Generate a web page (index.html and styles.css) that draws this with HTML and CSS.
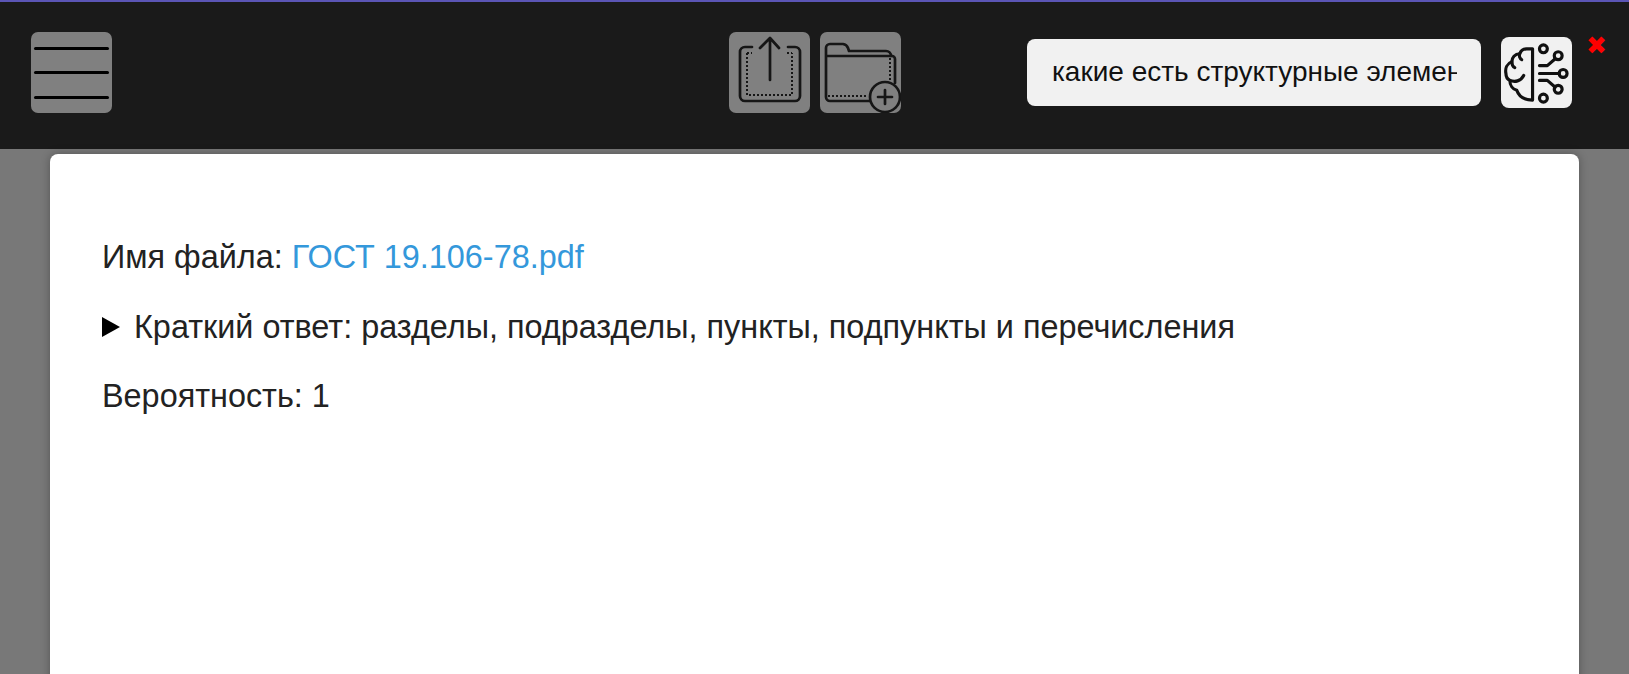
FILE: index.html
```html
<!DOCTYPE html>
<html lang="ru">
<head>
  <meta charset="UTF-8" />
  <meta name="viewport" content="width=device-width, initial-scale=1.0"/>
  <title>Поиск по документам</title>
  <link rel="stylesheet" href="styles.css">
</head>
<body>

  <header class="topbar">
    <button class="tool-button menu-button" aria-label="Меню">
      <span></span>
      <span></span>
      <span></span>
    </button>

    <div class="file-tools">
      <button class="tool-button" aria-label="Загрузить файл">
        <svg class="tool-icon" viewBox="0 0 81 81">
          <path d="M23 15h-7a5 5 0 0 0-5 5v44a5 5 0 0 0 5 5h50a5 5 0 0 0 5-5V20a5 5 0 0 0-5-5h-7" />
          <path d="M41 48V6M31 16L41 6l9 10" />
          <path class="dots" d="M18 21v42h45V21M18 21h5M58 21h5" />
        </svg>
      </button>
      <button class="tool-button" aria-label="Добавить папку">
        <svg class="tool-icon" viewBox="0 0 81 81">
          <path d="M50 69H10a4 4 0 0 1-4-4V16a4 4 0 0 1 4-4h13a6 6 0 0 1 5 4l1 3h37a5 5 0 0 1 5 5H6" />
          <path d="M71 24h1a3 3 0 0 1 3 3v24" />
          <path class="dots" d="M8 64h39M70 26v23" />
          <circle class="plus-ring" cx="65" cy="65" r="15" />
          <path d="M58 65h14M65 58v14" />
        </svg>
      </button>
    </div>

    <div class="search">
      <input class="search-input" type="text" value="какие есть структурные элементы документа" />
      <button class="ask-button" aria-label="Спросить">
        <svg class="brain-icon" viewBox="0 0 72 70">
          <path d="M32 11v52M32 11h-6c-4 0-6 2-7 5-5 0-8 4-8 8-5 2-7 7-6 12 0 3 2 6 4 7 0 5 3 9 7 10 2 6 7 10 16 10" />
          <path d="M19 16c-1 2 0 5 2 6M11 24c0 3 1 5 3 6M9 43c5 2 11 1 14-5" />
          <path d="M39 28h8l8-7M39 36h20M39 43h8l8 7" />
          <circle cx="43" cy="11" r="4" />
          <circle cx="58" cy="18" r="4" />
          <circle cx="63" cy="36" r="4" />
          <circle cx="58" cy="52" r="4" />
          <circle cx="43" cy="61" r="4" />
        </svg>
      </button>
      <span class="close-mark">✖</span>
    </div>
  </header>

  <main class="results">
    <article class="result-card">
      <p>Имя файла: <a href="#">ГОСТ 19.106-78.pdf</a></p>
      <details>
        <summary>Краткий ответ: разделы, подразделы, пункты, подпункты и перечисления</summary>
      </details>
      <p>Вероятность: 1</p>
    </article>
  </main>

</body>
</html>
```

FILE: styles.css
```css
* { margin: 0; padding: 0; box-sizing: border-box; }

html, body {
  height: 100%;
  overflow: hidden;
}

body {
  font-family: 'Liberation Sans', Arial, sans-serif;
  background: #787878;
  color: #222;
}

.topbar {
  height: 149px;
  padding: 0 31px 6px;
  display: grid;
  grid-template-columns: 1fr auto 1fr;
  align-items: center;
  background: #1a1a1a;
  border-top: 2px solid #5b55b5;
}

.tool-button {
  width: 81px;
  height: 81px;
  display: block;
  background: #808080;
  border: none;
  border-radius: 7px;
  cursor: pointer;
}

.menu-button {
  display: flex;
  flex-direction: column;
  align-items: center;
  justify-content: center;
  gap: 21.5px;
}

.menu-button span {
  display: block;
  width: 75px;
  height: 3px;
  border-radius: 2px;
  background: #000;
}

.file-tools {
  display: flex;
  gap: 10px;
}

.tool-icon {
  display: block;
  width: 81px;
  height: 81px;
  fill: none;
  stroke: #161616;
  stroke-width: 2.7;
  stroke-linecap: round;
  stroke-linejoin: round;
}

.tool-icon .dots {
  stroke-width: 2;
  stroke-linecap: butt;
  stroke-dasharray: 2 2;
}

.tool-icon .plus-ring {
  fill: #808080;
}

.search {
  justify-self: end;
  display: flex;
  align-items: center;
  margin-right: -14px;
}

.search-input {
  width: 454px;
  height: 67px;
  padding: 0 24px 2px 25px;
  font-family: inherit;
  font-size: 28px;
  color: #111;
  background: #f1f1f1;
  border: none;
  border-radius: 8px;
  outline: none;
}

.ask-button {
  width: 71px;
  height: 71px;
  margin-left: 20px;
  background: #f1f1f1;
  border: none;
  border-radius: 8px;
  cursor: pointer;
}

.brain-icon {
  display: block;
  width: 71px;
  height: 71px;
  fill: none;
  stroke: #111;
  stroke-width: 3.2;
  stroke-linecap: round;
  stroke-linejoin: round;
}

.close-mark {
  align-self: flex-start;
  width: 31px;
  margin-left: 9px;
  margin-top: -5px;
  font-size: 25px;
  line-height: 28px;
  color: #f00;
  text-align: center;
  font-family: 'DejaVu Sans', sans-serif;
}

.results {
  padding: 5px 50px 0;
}

.result-card {
  height: 600px;
  padding: 85px 52px 0;
  background: #fff;
  border-radius: 8px;
  box-shadow: 0 0 10px rgba(0, 0, 0, 0.3);
  font-size: 32.4px;
  line-height: 36px;
}

.result-card p,
.result-card details {
  margin-bottom: 33.5px;
}

.result-card a {
  color: #3498db;
  text-decoration: none;
}

.result-card summary {
  display: flex;
  align-items: center;
  gap: 14px;
  cursor: pointer;
}

.result-card summary::before {
  content: "";
  border-left: 18px solid #000;
  border-top: 10px solid transparent;
  border-bottom: 10px solid transparent;
}
```
